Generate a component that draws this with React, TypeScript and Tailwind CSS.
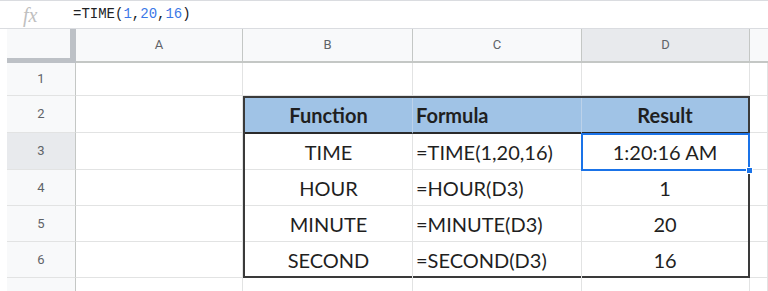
const cols = ["A", "B", "C", "D"];

const rows = [
  { fn: "TIME", formula: "=TIME(1,20,16)", result: "1:20:16 AM" },
  { fn: "HOUR", formula: "=HOUR(D3)", result: "1" },
  { fn: "MINUTE", formula: "=MINUTE(D3)", result: "20" },
  { fn: "SECOND", formula: "=SECOND(D3)", result: "16" },
];

const rowHeights = ["h-[36px]", "h-[36px]", "h-[36px]", "h-[36px]"];

function RowNum({ n, active }: { n: number; active?: boolean }) {
  return (
    <div
      className={`flex items-center justify-center border-r border-r-[#c4c7c5] border-b border-b-[#e2e3e3] text-[13px] text-[#5f6368] ${
        active ? "bg-[#e8eaed]" : "bg-[#f8f9fa]"
      }`}
    >
      {n}
    </div>
  );
}

function Blank() {
  return <div className="border-r border-b border-[#e2e3e3] bg-white" />;
}

export default function App() {
  return (
    <div className="w-[768px] h-[291px] overflow-hidden bg-white font-['Roboto',sans-serif]">
      {/* formula bar */}
      <div className="h-[29px] border-t border-b border-[#dadce0] flex items-center">
        <div className="w-[73px] pl-[23px] font-['Liberation_Serif',serif] italic text-[20px] text-[#c0c0c0] leading-none">
          fx
        </div>
        <div className="font-['Liberation_Mono',monospace] text-[14px] text-[#202124]">
          =TIME(<span className="text-[#3b78e7]">1</span>,<span className="text-[#3b78e7]">20</span>,
          <span className="text-[#3b78e7]">16</span>)
        </div>
      </div>

      {/* grid */}
      <div className="pl-[7px] grid grid-cols-[69px_167px_170px_169px_168px_1fr] grid-rows-[34px_33px_37px_37px_36px_36px_36px_36px]">
        {/* column headers */}
        <div className="bg-[#f8f9fa] border-r-[6px] border-b-[5px] border-[#bdc1c6]" />
        {cols.map((c) => (
          <div
            key={c}
            className={`flex items-center justify-center border-r border-b-2 border-[#c4c7c5] text-[13px] text-[#5f6368] ${
              c === "D" ? "bg-[#e8eaed]" : "bg-[#f8f9fa]"
            }`}
          >
            {c}
          </div>
        ))}
        <div className="bg-[#f8f9fa] border-b-2 border-[#c4c7c5]" />

        {/* row 1 */}
        <RowNum n={1} />
        <Blank />
        <Blank />
        <Blank />
        <Blank />
        <Blank />

        {/* table B2:D6 */}
        <div className="col-start-3 col-span-3 row-start-3 row-span-5 border-2 border-[#3a3a3a] grid grid-cols-[168px_169px_1fr] grid-rows-[36px_36px_36px_36px_1fr] font-['Lato',sans-serif] text-[20px] text-[#1f1f1f]">
          <div className="bg-[#a0c3e6] border-b-2 border-b-[#2a2a2a] border-r border-r-[#bcd2ea] flex items-center justify-center font-bold">
            Function
          </div>
          <div className="bg-[#a0c3e6] border-b-2 border-b-[#2a2a2a] border-r border-r-[#bcd2ea] flex items-center pl-[3px] font-bold">
            Formula
          </div>
          <div className="bg-[#a0c3e6] border-b-2 border-b-[#2a2a2a] flex items-center justify-center font-bold">
            Result
          </div>
          {rows.map((r, i) => (
            <div key={r.fn} className="contents">
              <div className={`${rowHeights[i]} flex items-center justify-center border-r ${i < 3 ? "border-b" : ""} border-[#e2e3e3]`}>
                {r.fn}
              </div>
              <div className={`flex items-center pl-[3px] border-r ${i < 3 ? "border-b" : ""} border-[#e2e3e3]`}>
                {r.formula}
              </div>
              <div className={`relative flex items-center justify-center ${i < 3 ? "border-b" : ""} border-[#e2e3e3]`}>
                {r.result}
                {i === 0 && (
                  <div className="absolute -left-[1px] -top-[1px] -right-[2px] -bottom-[2px] border-2 border-[#1a73e8]">
                    <div className="absolute -right-[5px] -bottom-[5px] w-[7px] h-[7px] bg-[#1a73e8] border border-white" />
                  </div>
                )}
              </div>
            </div>
          ))}
        </div>

        {/* rows 2-6 side cells */}
        {[2, 3, 4, 5, 6].map((n) => (
          <div key={n} className="contents">
            <RowNum n={n} active={n === 3} />
            <Blank />
            <Blank />
          </div>
        ))}

        {/* row 7 */}
        <RowNum n={7} />
        <Blank />
        <Blank />
        <Blank />
        <Blank />
        <Blank />
      </div>
    </div>
  );
}
